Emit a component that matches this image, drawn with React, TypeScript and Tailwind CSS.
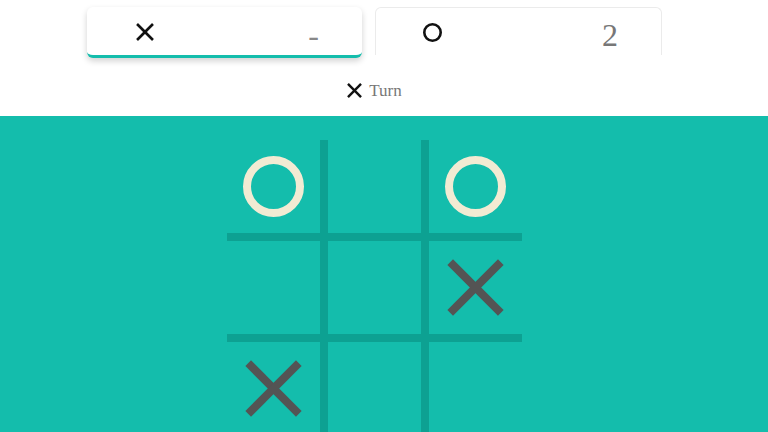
function Cross({ size, stroke, color }: { size: number; stroke: number; color: string }) {
  const p = stroke * 0.4;
  return (
    <svg width={size} height={size} viewBox={`0 0 ${size} ${size}`}>
      <line x1={p} y1={p} x2={size - p} y2={size - p} stroke={color} strokeWidth={stroke} />
      <line x1={size - p} y1={p} x2={p} y2={size - p} stroke={color} strokeWidth={stroke} />
    </svg>
  );
}

function Ring({ size, stroke, color }: { size: number; stroke: number; color: string }) {
  return (
    <svg width={size} height={size} viewBox={`0 0 ${size} ${size}`}>
      <circle cx={size / 2} cy={size / 2} r={(size - stroke) / 2} fill="none" stroke={color} strokeWidth={stroke} />
    </svg>
  );
}

const board: (string | null)[] = ['o', null, 'o', null, null, 'x', 'x', null, null];

export default function App() {
  return (
    <div className="min-h-screen w-full bg-[#14bdac]">
      <header className="flex h-[116px] flex-col items-center bg-white pr-[19px] pt-[7px]">
        <div className="flex gap-[13px]">
          <div className="flex h-[51px] w-[275px] items-start justify-between rounded-md border-b-[3px] border-[#14bdac] bg-white pl-[49px] pr-[43px] shadow-[0_3px_6px_rgba(0,0,0,0.18)]">
            <div className="pt-[16px]">
              <Cross size={18} stroke={2.6} color="#111" />
            </div>
            <span className="pt-[8px] text-[32px] leading-[40px] text-[#888] [font-family:'Liberation_Serif',serif]">-</span>
          </div>
          <div className="flex h-[48px] w-[287px] items-start justify-between rounded-t-md border border-b-0 border-[#ebebeb] bg-white pl-[47px] pr-[43px]">
            <div className="pt-[15px]">
              <Ring size={19} stroke={2.6} color="#111" />
            </div>
            <span className="pt-[7px] text-[32px] leading-[40px] text-[#777] [font-family:'Liberation_Serif',serif]">2</span>
          </div>
        </div>
        <div className="mt-[24px] flex items-center gap-[7px]">
          <Cross size={15} stroke={2.4} color="#111" />
          <span className="text-[17px] leading-none text-[#777] [font-family:'Liberation_Serif',serif]">Turn</span>
        </div>
      </header>
      <main className="flex justify-center pr-[19px] pt-[24px]">
        <div className="grid w-[295px] grid-cols-[93px_93px_93px] grid-rows-[93px_93px_93px] gap-[8px] bg-[#0da192]">
          {board.map((v, i) => (
            <div key={i} className="flex items-center justify-center bg-[#14bdac]">
              {v === 'o' && <Ring size={61} stroke={8} color="#f2ebd3" />}
              {v === 'x' && <Cross size={57} stroke={8} color="#545454" />}
            </div>
          ))}
        </div>
      </main>
    </div>
  );
}
